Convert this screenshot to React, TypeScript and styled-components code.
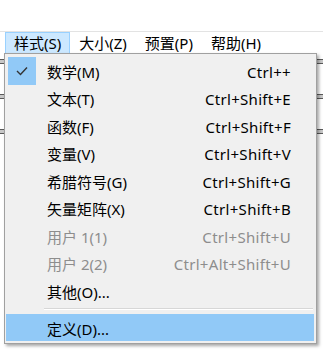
import React from "react";
import styled, { createGlobalStyle } from "styled-components";

const Global = createGlobalStyle`
  html, body { margin: 0; padding: 0; background: #ffffff; }
  body {
    font-family: "Noto Sans", "Noto Sans CJK SC", sans-serif;
    -webkit-font-smoothing: antialiased;
  }
`;

const Page = styled.div`
  position: relative;
  width: 323px;
  height: 351px;
  overflow: hidden;
  background: #ffffff;
`;

const TopSpace = styled.div`
  height: 31px;
`;

const MenuBar = styled.div`
  display: flex;
  align-items: stretch;
  height: 22px;
  border-top: 1px solid #e3e3e3;
  padding-left: 5px;
  background: #ffffff;
`;

const BarItem = styled.div<{ $open?: boolean }>`
  display: flex;
  align-items: center;
  padding: 0 8px;
  font-size: 15px;
  line-height: 20px;
  color: #000;
  box-sizing: border-box;
  border: 1px solid ${(p) => (p.$open ? "#99d1ff" : "transparent")};
  background: ${(p) => (p.$open ? "#cce8ff" : "transparent")};
  white-space: nowrap;
`;

const Workspace = styled.div`
  display: flex;
  flex-direction: column;
`;

const Rule = styled.div<{ $gap: number }>`
  margin-top: ${(p) => p.$gap}px;
  height: 3px;
  border-top: 1px solid #5a5a5a;
  border-bottom: 1px solid #5a5a5a;
  background: #c8c8c8;
`;

const Popup = styled.div`
  position: absolute;
  left: 4px;
  top: 53px;
  width: 313px;
  box-sizing: border-box;
  background: #f0f0f0;
  border: 1px solid #a0a0a0;
  padding: 3px 2px 2px 1px;
  box-shadow: 2px 2px 3px rgba(0, 0, 0, 0.35);
`;

const Row = styled.div<{ $hot?: boolean }>`
  display: grid;
  grid-template-columns: 28px 1fr auto;
  column-gap: 11px;
  align-items: center;
  height: ${(p) => (p.$hot ? 27 : 27.5)}px;
  padding: 0 23px 0 2px;
  background: ${(p) => (p.$hot ? "#91c9f7" : "transparent")};
`;

const CheckBox = styled.div<{ $on?: boolean }>`
  width: 28px;
  height: 28px;
  display: flex;
  align-items: center;
  justify-content: center;
  background: ${(p) => (p.$on ? "#91c9f7" : "transparent")};
`;

const Label = styled.span<{ $dim?: boolean }>`
  font-size: 15px;
  line-height: 20px;
  color: ${(p) => (p.$dim ? "#8d8d8d" : "#000")};
  white-space: nowrap;
  padding-top: 1px;
`;

const Shortcut = styled.span<{ $dim?: boolean }>`
  font-size: 15px;
  line-height: 20px;
  letter-spacing: 0.3px;
  color: ${(p) => (p.$dim ? "#8d8d8d" : "#000")};
  white-space: nowrap;
  text-align: right;
  padding-top: 1px;
`;

const SepWrap = styled.div`
  height: 9.5px;
  display: flex;
  align-items: center;
  padding-left: 38px;
  padding-right: 1px;
`;

const SepLine = styled.div`
  flex: 1;
  height: 1px;
  background: #d7d7d7;
  border-bottom: 1px solid #ffffff;
`;

const Check = () => (
  <svg width="12" height="10" viewBox="0 0 12 10">
    <path d="M1 5 L4.5 8.5 L11 1.5" fill="none" stroke="#333" strokeWidth="1.4" />
  </svg>
);

type Item = { label: string; key: string; dim?: boolean; checked?: boolean };

const items: Item[] = [
  { label: "数学(M)", key: "Ctrl++", checked: true },
  { label: "文本(T)", key: "Ctrl+Shift+E" },
  { label: "函数(F)", key: "Ctrl+Shift+F" },
  { label: "变量(V)", key: "Ctrl+Shift+V" },
  { label: "希腊符号(G)", key: "Ctrl+Shift+G" },
  { label: "矢量矩阵(X)", key: "Ctrl+Shift+B" },
  { label: "用户 1(1)", key: "Ctrl+Shift+U", dim: true },
  { label: "用户 2(2)", key: "Ctrl+Alt+Shift+U", dim: true },
  { label: "其他(O)...", key: "" },
];

export default function App() {
  return (
    <Page>
      <Global />
      <TopSpace />
      <MenuBar>
        <BarItem $open>样式(S)</BarItem>
        <BarItem>大小(Z)</BarItem>
        <BarItem>预置(P)</BarItem>
        <BarItem>帮助(H)</BarItem>
      </MenuBar>
      <Workspace>
        <Rule $gap={5} />
        <Rule $gap={30} />
        <Rule $gap={30} />
      </Workspace>
      <Popup>
        {items.map((it) => (
          <Row key={it.label}>
            <CheckBox $on={it.checked}>{it.checked && <Check />}</CheckBox>
            <Label $dim={it.dim}>{it.label}</Label>
            <Shortcut $dim={it.dim}>{it.key}</Shortcut>
          </Row>
        ))}
        <SepWrap>
          <SepLine />
        </SepWrap>
        <Row $hot>
          <CheckBox />
          <Label>定义(D)...</Label>
          <Shortcut />
        </Row>
      </Popup>
    </Page>
  );
}
